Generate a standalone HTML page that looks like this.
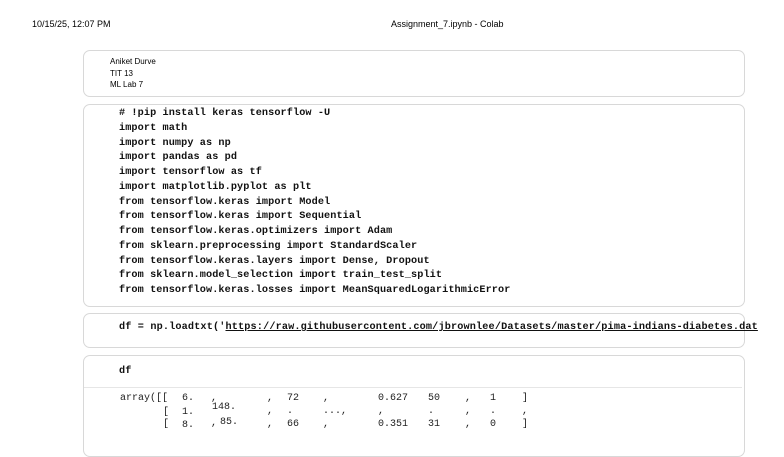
<!DOCTYPE html>
<html><head><meta charset="utf-8"><style>
body{margin:0;width:784px;height:441px;overflow:hidden;background:#fff;position:relative;font-family:"Liberation Sans",sans-serif;color:#000}
.a{position:absolute;white-space:pre}
.hdr{font-size:9px;top:19px}
.cell{position:absolute;left:83px;width:660px;border:1px solid #d8d8d8;border-radius:7px;background:#fff}
.m{font-family:"Liberation Mono",monospace;font-size:10.2px;font-weight:bold;letter-spacing:0.1px;color:#111}
.o{font-family:"Liberation Mono",monospace;font-size:10px;color:#222}
.s{font-size:8px}
</style></head><body>
<div class="a hdr" style="left:32px">10/15/25, 12:07 PM</div>
<div class="a hdr" style="left:391px">Assignment_7.ipynb - Colab</div>

<div class="cell" style="top:50px;height:45px"></div>
<div class="a s" style="left:110px;top:57px">Aniket Durve</div>
<div class="a s" style="left:110px;top:69px">TIT 13</div>
<div class="a s" style="left:110px;top:80px">ML Lab 7</div>

<div class="cell" style="top:104px;height:201px"></div>
<div class="a m" style="left:119px;top:107px;line-height:14.75px"># !pip install keras tensorflow -U
import math
import numpy as np
import pandas as pd
import tensorflow as tf
import matplotlib.pyplot as plt
from tensorflow.keras import Model
from tensorflow.keras import Sequential
from tensorflow.keras.optimizers import Adam
from sklearn.preprocessing import StandardScaler
from tensorflow.keras.layers import Dense, Dropout
from sklearn.model_selection import train_test_split
from tensorflow.keras.losses import MeanSquaredLogarithmicError</div>

<div class="cell" style="top:313px;height:33px"></div>
<div class="a m" style="left:119px;top:322px;letter-spacing:0.15px">df = np.loadtxt('<span style="text-decoration:underline">https://raw.githubusercontent.com/jbrownlee/Datasets/master/pima-indians-diabetes.dat</span></div>

<div class="cell" style="top:355px;height:100px"></div>
<div style="position:absolute;left:84px;top:387px;width:658px;border-top:1px solid #e6e6e6"></div>
<div class="a m" style="left:119px;top:366px">df</div>

<div class="a o" style="left:120px;top:393px">array([[</div>
<div class="a o" style="left:182px;top:393px">6.</div>
<div class="a o" style="left:211px;top:393px">,</div>
<div class="a o" style="left:267px;top:393px">,</div>
<div class="a o" style="left:287px;top:393px">72</div>
<div class="a o" style="left:323px;top:393px">,</div>
<div class="a o" style="left:378px;top:393px">0.627</div>
<div class="a o" style="left:428px;top:393px">50</div>
<div class="a o" style="left:465px;top:393px">,</div>
<div class="a o" style="left:490px;top:393px">1</div>
<div class="a o" style="left:522px;top:393px">]</div>

<div class="a o" style="left:163px;top:407px">[</div>
<div class="a o" style="left:182px;top:407px">1.</div>
<div class="a o" style="left:212px;top:402px">148.</div>
<div class="a o" style="left:267px;top:406px">,</div>
<div class="a o" style="left:287px;top:406px">.</div>
<div class="a o" style="left:323px;top:406px">...,</div>
<div class="a o" style="left:378px;top:406px">,</div>
<div class="a o" style="left:428px;top:406px">.</div>
<div class="a o" style="left:465px;top:406px">,</div>
<div class="a o" style="left:490px;top:406px">.</div>
<div class="a o" style="left:522px;top:406px">,</div>

<div class="a o" style="left:163px;top:419px">[</div>
<div class="a o" style="left:182px;top:420px">8.</div>
<div class="a o" style="left:211px;top:418px">,</div>
<div class="a o" style="left:220px;top:417px">85.</div>
<div class="a o" style="left:267px;top:419px">,</div>
<div class="a o" style="left:287px;top:419px">66</div>
<div class="a o" style="left:323px;top:419px">,</div>
<div class="a o" style="left:378px;top:419px">0.351</div>
<div class="a o" style="left:428px;top:419px">31</div>
<div class="a o" style="left:465px;top:419px">,</div>
<div class="a o" style="left:490px;top:419px">0</div>
<div class="a o" style="left:522px;top:419px">]</div>
</body></html>
